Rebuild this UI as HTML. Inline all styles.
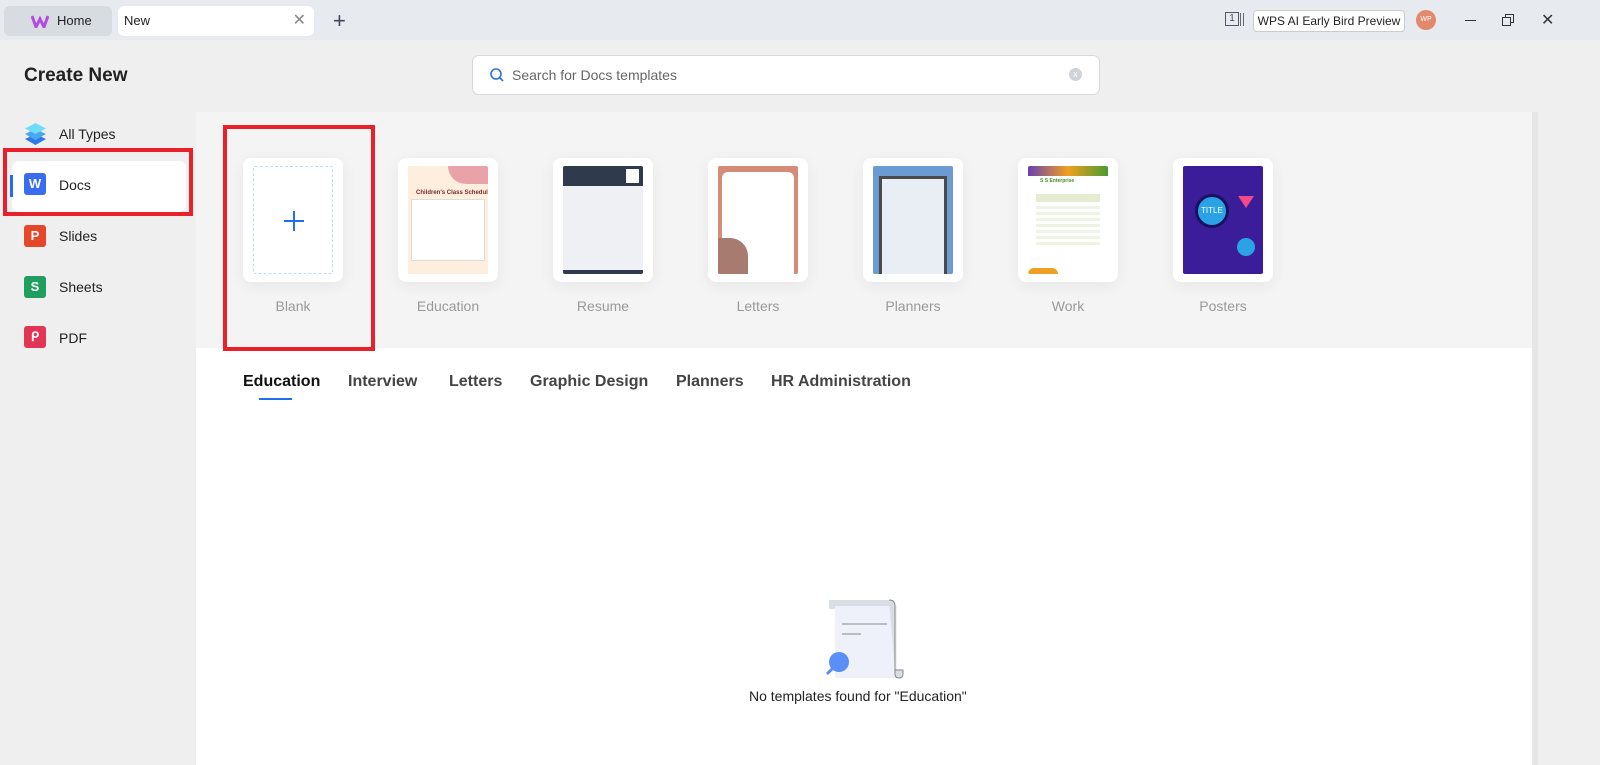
<!DOCTYPE html>
<html><head><meta charset="utf-8"><style>
*{box-sizing:border-box;margin:0;padding:0}
body{width:1600px;height:765px;overflow:hidden;background:#efefef;font-family:"Liberation Sans",sans-serif;position:relative;color:#222}
.abs{position:absolute}
.top{left:0;top:0;width:1600px;height:40px;background:#e7ebef}
.tab{top:6px;height:30px;border-radius:6px;font-size:13px;line-height:30px}
.card{width:100px;height:124px;background:#fff;border-radius:8px;box-shadow:0 4px 16px rgba(0,0,0,.06);top:158px;padding:8px 10px}
.thumb{width:80px;height:108px;border-radius:2px;overflow:hidden;position:relative}
.lbl{top:298px;width:100px;text-align:center;font-size:14px;color:#999}
.side{left:24px;font-size:14px;color:#222}
.ic{position:absolute;left:24px;width:22px;height:22px;border-radius:3px;color:#fff;font-weight:bold;font-size:13px;text-align:center;line-height:21px}
.tabs span{position:absolute;top:373px;font-size:16px;font-weight:bold;color:#444}
</style></head><body>
<div class="abs top"></div>
<div class="abs tab" style="left:4px;width:108px;background:#d7dce1;padding-left:28px">
<svg class="abs" style="left:27px;top:9px" width="18" height="13" viewBox="0 0 18 13"><path d="M1 1 L5 12 L9 4 L13 12 L17 1" fill="none" stroke="#b44be0" stroke-width="3"/></svg>
<span style="margin-left:25px">Home</span></div>
<div class="abs tab" style="left:118px;width:196px;background:#fff;padding-left:6px">New<span class="abs" style="right:8px;top:0;color:#888;font-size:16px">✕</span></div>
<div class="abs" style="left:333px;top:8px;font-size:22px;color:#445">+</div>
<div class="abs" style="left:1225px;top:12px;width:14px;height:14px;border:1px solid #556;font-size:10px;text-align:center;line-height:12px;color:#446">1</div>
<div class="abs" style="left:1240px;top:13px;width:4px;height:13px;border-left:1px solid #667;border-right:1px solid #667"></div>
<div class="abs" style="left:1253px;top:10px;width:152px;height:22px;background:#fff;border:1px solid #ccc;border-radius:4px;font-size:12px;text-align:center;line-height:20px;color:#222">WPS AI Early Bird Preview</div>
<div class="abs" style="left:1416px;top:10px;width:20px;height:20px;border-radius:50%;background:#e0896b;color:#fff;font-size:7px;text-align:center;line-height:20px">WP</div>
<div class="abs" style="left:1465px;top:20px;width:11px;height:1px;background:#333"></div>
<div class="abs" style="left:1505px;top:14px;width:9px;height:9px;border:1px solid #333;background:#e7ebef"></div>
<div class="abs" style="left:1502px;top:17px;width:9px;height:9px;border:1px solid #333;background:#e7ebef"></div>
<div class="abs" style="left:1541px;top:10px;font-size:16px;color:#333">✕</div>

<div class="abs" style="left:24px;top:65px;font-size:19px;font-weight:bold;color:#222">Create New</div>
<div class="abs" style="left:472px;top:55px;width:628px;height:40px;background:#fff;border:1px solid #d8d8d8;border-radius:7px"></div>
<svg class="abs" style="left:489px;top:67px" width="16" height="16"><circle cx="7" cy="7" r="5" fill="none" stroke="#2e6ee8" stroke-width="1.6"/><path d="M10.5 10.5 L14 14" stroke="#2e6ee8" stroke-width="1.6"/></svg>
<div class="abs" style="left:512px;top:67px;font-size:14px;color:#666">Search for Docs templates</div>
<div class="abs" style="left:1069px;top:68px;width:13px;height:13px;border-radius:50%;background:#d0d3d8;color:#fff;font-size:9px;text-align:center;line-height:13px">x</div>

<svg class="abs" style="left:24px;top:122px" width="23" height="24" viewBox="0 0 23 24"><path d="M11.5 12 L22 17 L11.5 23 L1 17Z" fill="#2d7be8"/><path d="M11.5 7 L22 12 L11.5 18 L1 12Z" fill="#49a7f0"/><path d="M11.5 1 L22 6.5 L11.5 12 L1 6.5Z" fill="#6fdcfb"/></svg>
<div class="abs side" style="left:59px;top:126px">All Types</div>
<div class="abs" style="left:12px;top:161px;width:174px;height:51px;background:#fff;border-radius:7px"></div>
<div class="abs" style="left:10px;top:175px;width:3px;height:22px;background:#1f6ff0"></div>
<div class="ic" style="top:173px;background:#3b6cf0">W</div>
<div class="abs side" style="left:59px;top:177px">Docs</div>
<div class="ic" style="top:225px;background:#e5472b">P</div>
<div class="abs side" style="left:59px;top:228px">Slides</div>
<div class="ic" style="top:276px;background:#1f9e60">S</div>
<div class="abs side" style="left:59px;top:279px">Sheets</div>
<div class="ic" style="top:326px;background:#e23555">ᑭ</div>
<div class="abs side" style="left:59px;top:330px">PDF</div>
<div class="abs" style="left:3px;top:148px;width:190px;height:68px;border:4px solid #e8202a"></div>

<div class="abs" style="left:196px;top:112px;width:1336px;height:236px;background:#f4f4f4"></div>
<div class="abs" style="left:196px;top:348px;width:1336px;height:417px;background:#fff"></div>
<div class="abs" style="left:1532px;top:112px;width:6px;height:653px;background:#e6e6e6"></div>

<div class="abs card" style="left:243px"><div class="thumb" style="border:1px dashed #c5d8f5;height:108px"><div class="abs" style="left:30px;top:53px;width:20px;height:2px;background:#1f6ff0"></div><div class="abs" style="left:39px;top:44px;width:2px;height:20px;background:#1f6ff0"></div></div></div>
<div class="abs lbl" style="left:243px">Blank</div>

<div class="abs card" style="left:398px"><div class="thumb" style="background:#fdeedd"><div class="abs" style="left:40px;top:0;width:40px;height:18px;background:#e9a3a8;border-radius:0 0 0 20px"></div><div class="abs" style="left:8px;top:24px;font-size:6px;font-weight:bold;color:#7a2a2a;white-space:nowrap">Children's Class Schedule</div><div class="abs" style="left:3px;top:33px;width:74px;height:62px;background:#fff;border:1px solid #ddd"></div></div></div>
<div class="abs lbl" style="left:398px">Education</div>

<div class="abs card" style="left:553px"><div class="thumb" style="background:#2f3a4d"><div class="abs" style="left:0;top:20px;width:80px;height:84px;background:#eef0f3"></div><div class="abs" style="left:63px;top:3px;width:13px;height:14px;background:#fff"></div></div></div>
<div class="abs lbl" style="left:553px">Resume</div>

<div class="abs card" style="left:708px"><div class="thumb" style="background:#d68b77"><div class="abs" style="left:4px;top:6px;width:72px;height:102px;background:#fff;border-radius:6px 6px 0 0"></div><div class="abs" style="left:0;top:72px;width:30px;height:36px;background:#a87b70;border-radius:0 18px 0 0"></div></div></div>
<div class="abs lbl" style="left:708px">Letters</div>

<div class="abs card" style="left:863px"><div class="thumb" style="background:#6a9bd2"><div class="abs" style="left:6px;top:10px;width:68px;height:98px;background:#4a4a4a"></div><div class="abs" style="left:9px;top:13px;width:62px;height:95px;background:#e9eef5"></div></div></div>
<div class="abs lbl" style="left:863px">Planners</div>

<div class="abs card" style="left:1018px"><div class="thumb" style="background:#fff"><div class="abs" style="left:0;top:0;width:80px;height:10px;background:linear-gradient(90deg,#6a3fb0,#f0a020,#4a9a30)"></div><div class="abs" style="left:12px;top:12px;font-size:5px;color:#4a8a2a;font-weight:bold">S S Enterprise</div><div class="abs" style="left:8px;top:28px;width:64px;height:8px;background:#e4ecd2"></div><div class="abs" style="left:8px;top:40px;width:64px;height:40px;background:repeating-linear-gradient(#eef3e2 0 3px,#fff 3px 6px)"></div><div class="abs" style="left:0;top:102px;width:30px;height:6px;background:#f0a020;border-radius:10px 10px 0 0"></div></div></div>
<div class="abs lbl" style="left:1018px">Work</div>

<div class="abs card" style="left:1173px"><div class="thumb" style="background:#3b1d9a"><div class="abs" style="left:12px;top:28px;width:34px;height:34px;border-radius:50%;background:#2aa3e6;border:3px solid #1a1060"></div><div class="abs" style="left:18px;top:40px;font-size:8px;color:#fff">TITLE</div><div class="abs" style="left:54px;top:72px;width:18px;height:18px;border-radius:50%;background:#2aa3e6"></div><div class="abs" style="left:55px;top:30px;width:0;height:0;border-left:8px solid transparent;border-right:8px solid transparent;border-top:12px solid #f04a8a"></div></div></div>
<div class="abs lbl" style="left:1173px">Posters</div>

<div class="abs" style="left:223px;top:125px;width:152px;height:226px;border:4px solid #e8202a"></div>

<div class="tabs"><span style="left:243px;color:#111">Education</span><span style="left:348px">Interview</span><span style="left:449px">Letters</span><span style="left:530px">Graphic Design</span><span style="left:676px">Planners</span><span style="left:771px">HR Administration</span></div>
<div class="abs" style="left:259px;top:398px;width:33px;height:2px;background:#1f6ff0"></div>

<svg class="abs" style="left:825px;top:598px" width="80" height="84" viewBox="0 0 80 84"><rect x="4" y="2" width="64" height="9" fill="#d9dde4"/><rect x="10" y="8" width="62" height="72" fill="#eef1f9"/><path d="M64 2 Q70 2 70 8 L70 76 Q70 80 74 80 Q78 80 78 76 L78 72 L70 72" fill="#d9dde4" stroke="#888" stroke-width="1"/><line x1="17" y1="26" x2="62" y2="26" stroke="#888"/><line x1="17" y1="36" x2="36" y2="36" stroke="#888"/><line x1="8" y1="70" x2="2" y2="76" stroke="#5b8ff8" stroke-width="3"/><circle cx="14" cy="64" r="10" fill="#5b8ff8"/></svg>
<div class="abs" style="left:749px;top:688px;font-size:14px;color:#222">No templates found for "Education"</div>
</body></html>
